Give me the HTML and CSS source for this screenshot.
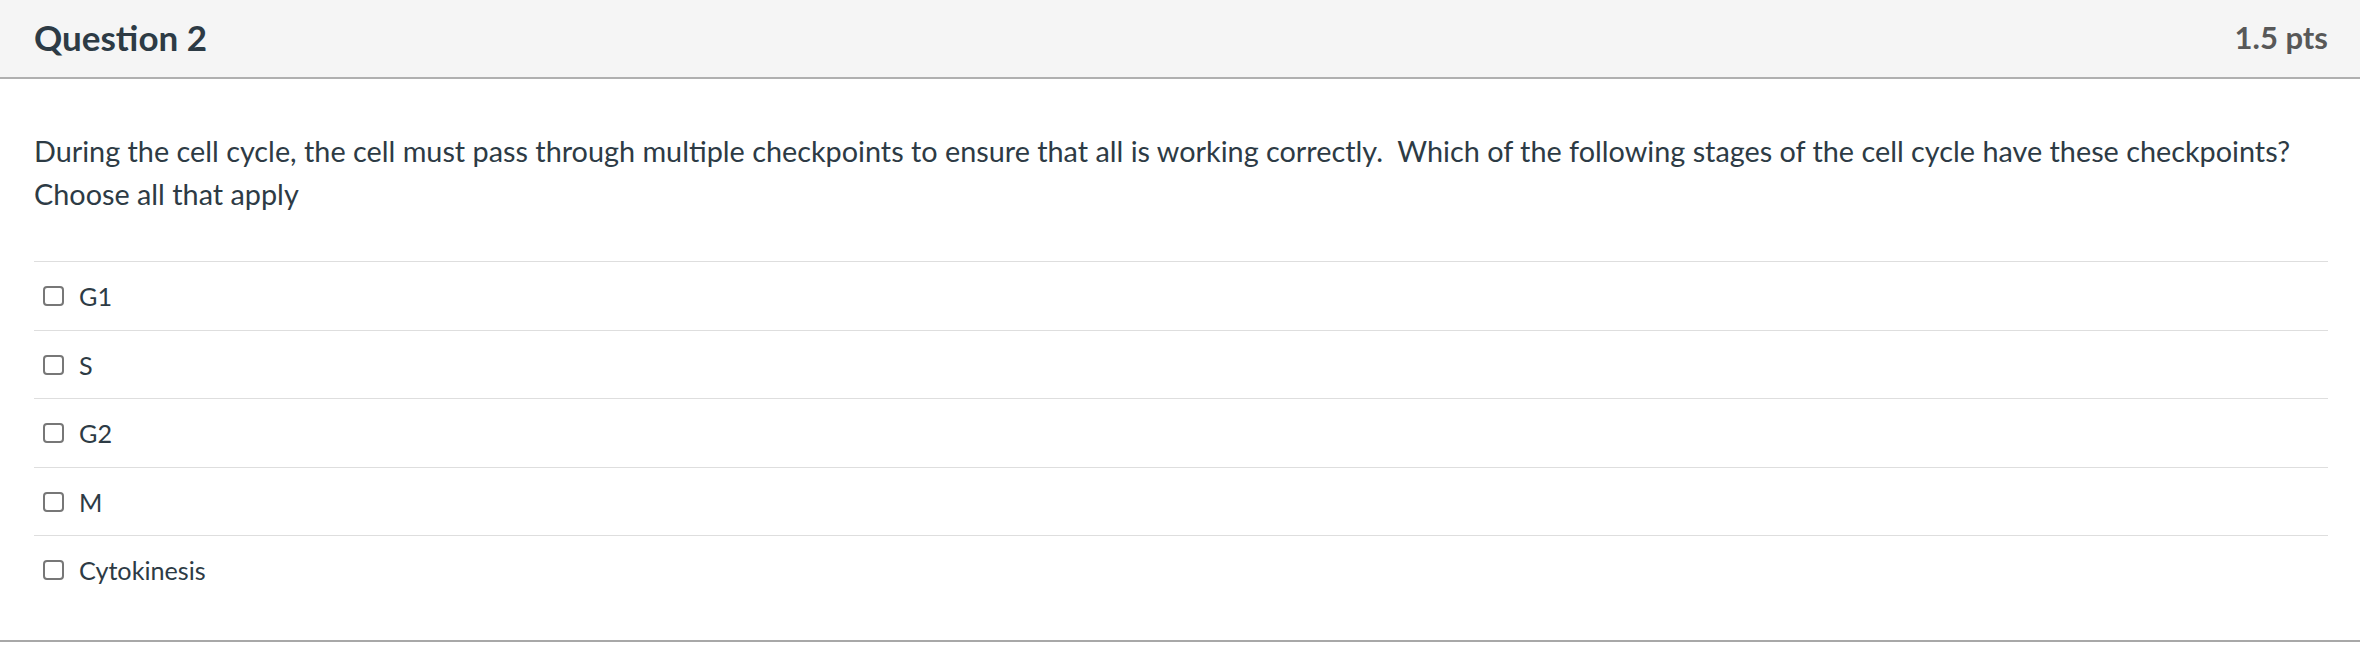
FILE: index.html
```html
<!DOCTYPE html>
<html lang="en">
<head>
<meta charset="utf-8">
<title>Question 2</title>
<link rel="stylesheet" href="styles.css">
</head>
<body>
<div class="question">
  <div class="header">
    <h2 class="title">Question 2</h2>
    <div class="points">1.5 pts</div>
  </div>
  <div class="content">
    <p class="text">During the cell cycle, the cell must pass through multiple checkpoints to ensure that all is working correctly.&nbsp; Which of the following stages of the cell cycle have these checkpoints?<br>Choose all that apply</p>
    <div class="answers">
      <label class="answer"><span class="box"></span><span class="label">G1</span></label>
      <label class="answer"><span class="box"></span><span class="label">S</span></label>
      <label class="answer"><span class="box"></span><span class="label">G2</span></label>
      <label class="answer"><span class="box"></span><span class="label">M</span></label>
      <label class="answer"><span class="box"></span><span class="label">Cytokinesis</span></label>
    </div>
  </div>
</div>
</body>
</html>
```
FILE: styles.css
```css
html, body {
  margin: 0;
  padding: 0;
  background: #ffffff;
}
body {
  font-family: Lato, "Noto Sans", sans-serif;
  color: #2d3b45;
}
.question {
  width: 2360px;
  height: 642px;
  box-sizing: border-box;
  border-bottom: 2px solid #a8a8a8;
}
.header {
  height: 79px;
  box-sizing: border-box;
  background: #f5f5f5;
  border-bottom: 2px solid #b0b0b0;
  display: flex;
  align-items: center;
  justify-content: space-between;
  padding: 0 32px 4px 34px;
}
.title {
  margin: 0;
  font-size: 35px;
  font-weight: 700;
  color: #2d3b45;
}
.points {
  font-size: 31px;
  font-weight: 700;
  color: #585858;
}
.content {
  padding: 0 32px 0 34px;
}
.text {
  margin: 51px 0 0 0;
  font-size: 28.8px;
  line-height: 1.5;
}
.answers {
  margin-top: 45px;
}
.answer {
  display: flex;
  align-items: center;
  height: 68.5px;
  border-top: 1px solid #dedede;
  padding-left: 9px;
  box-sizing: border-box;
}
.box {
  width: 17px;
  height: 16px;
  border: 2px solid #777777;
  border-radius: 4px;
  margin-right: 15px;
  flex: none;
}
.label {
  font-size: 25.2px;
}
```
